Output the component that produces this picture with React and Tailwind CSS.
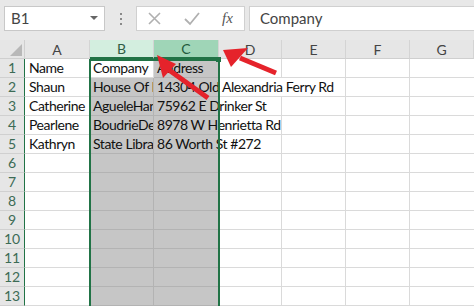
import React from 'react';

const widths = ['w-[25px]', 'w-[65px]', 'w-[64px]', 'w-[65px]', 'w-[63px]', 'w-[64px]', 'w-[64px]', 'w-[64px]'];
const letters = ['A', 'B', 'C', 'D', 'E', 'F', 'G'];

const rows = [
  ['Name', 'Company', 'Address'],
  ['Shaun', 'House Of Hearts', '14304 Old Alexandria Ferry Rd'],
  ['Catherine', 'AgueleHandbags', '75962 E Drinker St'],
  ['Pearlene', 'BoudrieDesigns', '8978 W Henrietta Rd'],
  ['Kathryn', 'State Library', '86 Worth St #272'],
];

const HeaderRow = () => (
  <div className="flex h-[19px]">
    <div className={`${widths[0]} h-full bg-[#e6e6e6] border-r border-b border-[#cfcfcf] relative`}>
      <svg width="25" height="19" className="absolute inset-0">
        <polygon points="10,16 22,16 22,4" fill="#b8b8b8" />
      </svg>
    </div>
    {letters.map((l, i) => {
      let cls = 'bg-[#e6e6e6] text-[#444] border-b border-[#cfcfcf]';
      if (l === 'B') cls = 'bg-[#d3eedf] text-[#2f5d45] border-b-2 border-b-[#217346]';
      if (l === 'C') cls = 'bg-[#9fd5b7] text-[#1f5a3b] border-b-2 border-b-[#217346]';
      return (
        <div
          key={l}
          className={`${widths[i + 1]} h-full flex items-center justify-center text-[14px] border-r border-r-[#d4d4d4] ${cls}`}
        >
          {l}
        </div>
      );
    })}
  </div>
);

const DataRow = ({ n }) => {
  const data = rows[n - 1] || ['', '', ''];
  const grayB = n !== 1;
  return (
    <div className="flex h-[19px] text-[14px] tracking-[-0.45px] leading-[18px] text-[#111]">
      <div className={`${widths[0]} h-full bg-[#e6e6e6] border-b border-[#d0d0d0] border-r border-r-[#217346] flex items-center justify-center tracking-normal text-[#3c6b55]`}>
        {n}
      </div>
      <div className={`${widths[1]} h-full bg-white border-r border-b border-[#dadada] overflow-hidden whitespace-nowrap pl-[4px]`}>
        {data[0]}
      </div>
      <div className={`${widths[2]} h-full ${grayB ? 'bg-[#c6c6c6] border-[#b3b3b3]' : 'bg-white border-[#dadada]'} border-r border-b overflow-hidden whitespace-nowrap pl-[3px]`}>
        {data[1]}
      </div>
      <div className={`${widths[3]} h-full bg-[#c6c6c6] border-b border-[#b3b3b3] whitespace-nowrap pl-[3px]`}>
        <span className="relative z-10">{data[2]}</span>
      </div>
      <div className={`${widths[4]} h-full bg-white border-b border-[#dadada] ${n === 2 ? '' : 'border-r'}`} />
      <div className={`${widths[5]} h-full bg-white border-r border-b border-[#dadada]`} />
      <div className={`${widths[6]} h-full bg-white border-r border-b border-[#dadada]`} />
      <div className={`${widths[7]} h-full bg-white border-b border-[#dadada]`} />
    </div>
  );
};

export default function App() {
  const nums = [1, 2, 3, 4, 5, 6, 7, 8, 9, 10, 11, 12, 13];
  return (
    <div className="relative w-[474px] h-[306px] overflow-hidden bg-white font-['Lato',sans-serif]">
      {/* formula bar */}
      <div className="h-[40px] bg-[#e8e8e8] flex items-start pt-[6px] pl-[4px]">
        <div className="w-[101px] h-[25px] bg-white border border-[#c8c8c8] flex items-center pl-[6px] pr-[6px] text-[15px] text-[#444]">
          <span className="flex-1">B1</span>
          <svg width="8" height="5"><polygon points="0,0 8,0 4,4" fill="#666" /></svg>
        </div>
        <div className="w-[31px] h-[25px] flex flex-col items-center justify-center gap-[3px]">
          <span className="w-[2px] h-[2px] bg-[#8a8a8a]" />
          <span className="w-[2px] h-[2px] bg-[#8a8a8a]" />
          <span className="w-[2px] h-[2px] bg-[#8a8a8a]" />
        </div>
        <div className="w-[109px] h-[25px] bg-white border border-[#d0d0d0] flex items-center">
          <svg width="109" height="23">
            <path d="M12 6 L23 17 M23 6 L12 17" stroke="#b0b0b0" strokeWidth="1.6" />
            <path d="M48 12 L53 17 L62 6" stroke="#b0b0b0" strokeWidth="1.8" fill="none" />
          </svg>
          <span className="absolute ml-[85px] text-[15px] italic text-[#555] font-['Liberation_Serif',serif]">fx</span>
        </div>
        <div className="ml-[4px] flex-1 h-[25px] bg-white border border-[#d0d0d0] border-r-0 flex items-center pl-[10px] text-[15px] text-[#444]">
          Company
        </div>
      </div>

      <HeaderRow />
      {nums.map((n) => (
        <DataRow key={n} n={n} />
      ))}

      {/* selection outline */}
      <div className="absolute left-[89px] top-[59px] w-[131px] h-[250px] border-2 border-[#217346] pointer-events-none z-20" />
      <div className="absolute left-[216px] top-[57px] w-[5px] h-[5px] bg-[#217346] z-20" />

      {/* arrows */}
      <svg width="474" height="306" className="absolute inset-0 z-30 pointer-events-none">
        <line x1="169" y1="70" x2="208" y2="98" stroke="#e5232b" strokeWidth="5" />
        <polygon points="157,55 163,78 176,64" fill="#e5232b" />
        <line x1="240" y1="58" x2="276" y2="73" stroke="#e5232b" strokeWidth="5" />
        <polygon points="223,50 231,67 248,48" fill="#e5232b" />
      </svg>
    </div>
  );
}
